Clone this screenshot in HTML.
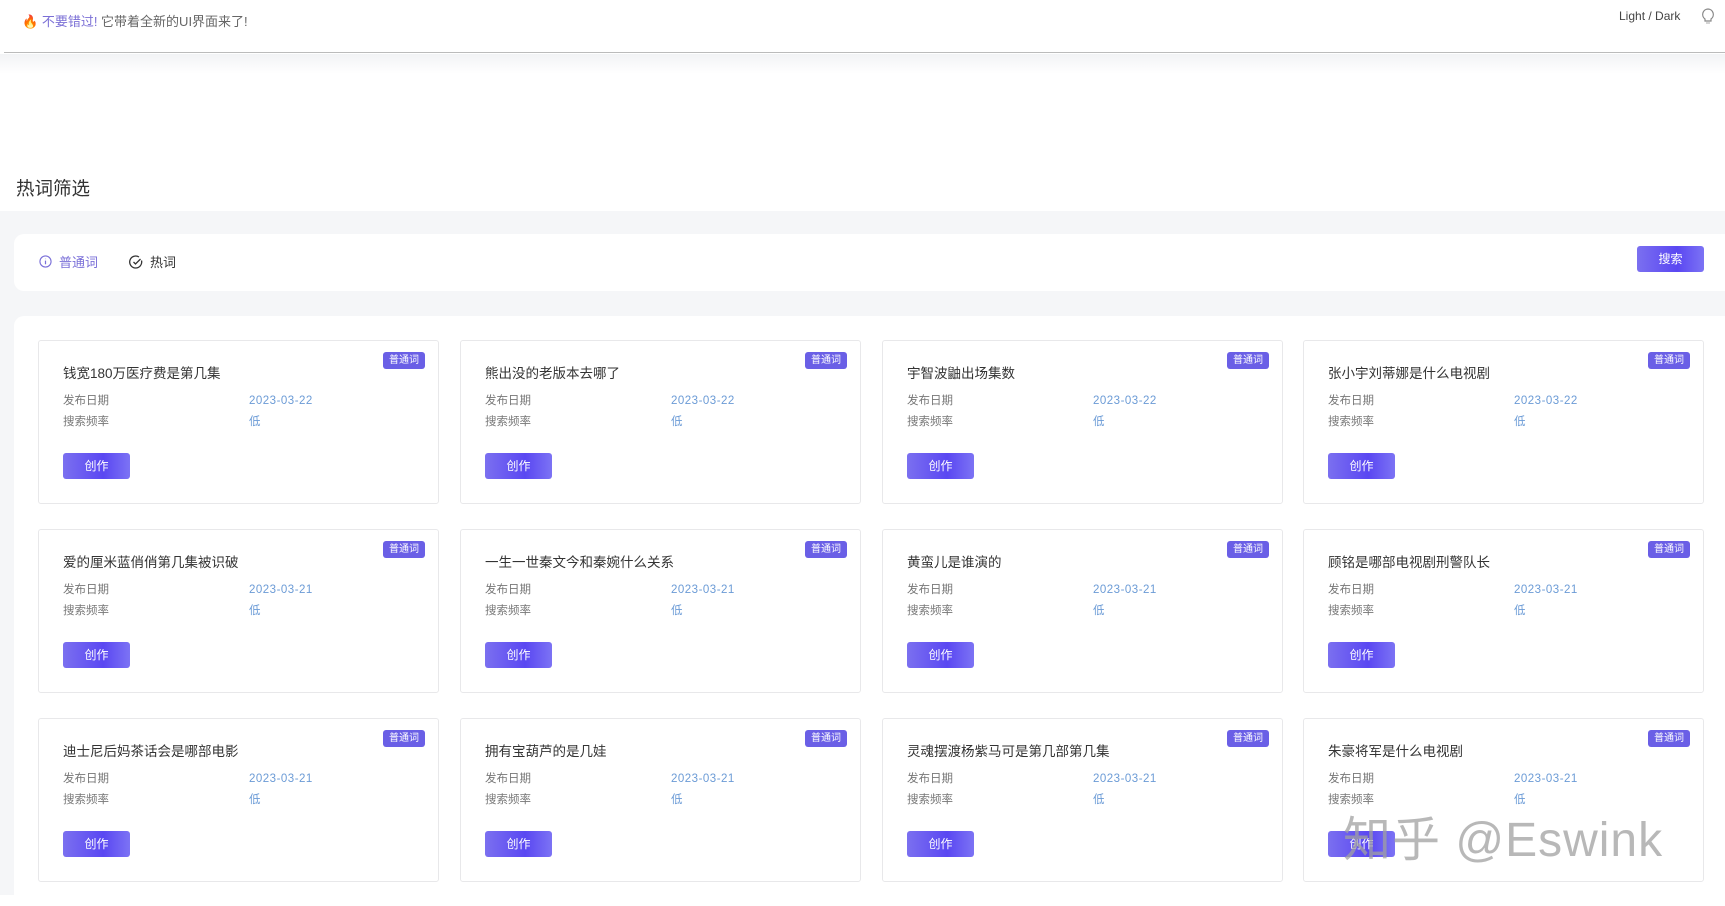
<!DOCTYPE html>
<html><head><meta charset="utf-8"><style>
*{box-sizing:border-box;margin:0;padding:0}
body{width:1725px;height:895px;overflow:hidden;background:#fff;font-family:"Liberation Sans","Noto Sans CJK SC",sans-serif;position:relative;color:#333}
.hdr{position:absolute;left:0;top:0;width:1725px;height:53px;background:#fff;border-bottom:1px solid #bbb;margin-left:4px}
.shadow{position:absolute;left:0;top:54px;width:1725px;height:20px;background:linear-gradient(#f2f3f5,#fff)}
.notice{position:absolute;left:22px;top:11px;font-size:13px;color:#666}
.notice b{font-weight:normal;color:#7b6fd6}
.ld{position:absolute;left:1619px;top:9px;font-size:12px;color:#444}
.bulb{position:absolute;left:1701px;top:8px}
.title{position:absolute;left:16px;top:175px;font-size:18.5px;color:#333}
.gray{position:absolute;left:0;top:211px;width:1725px;height:684px;background:#f5f6f8}
.filter{position:absolute;left:14px;top:234px;width:1720px;height:57px;background:#fff;border-radius:10px}
.r1{position:absolute;left:39px;top:252px;font-size:13px;color:#7a6fd8;display:flex;align-items:center;gap:7px}
.r2{position:absolute;left:129px;top:252px;font-size:13px;color:#333;display:flex;align-items:center;gap:7px}
.btn{background:linear-gradient(90deg,#7b70f0,#5a47f2 60%,#7c73f4);color:#fff;border-radius:3px;font-size:12px;text-align:center}
.sbtn{position:absolute;left:1637px;top:246px;width:67px;height:26px;line-height:26px}
.content{position:absolute;left:14px;top:316px;width:1720px;height:590px;background:#fff;border-radius:10px}
.card{position:absolute;width:401px;height:164px;border:1px solid #e8e8ea;border-radius:3px;background:#fff}
.card .t{position:absolute;left:24px;top:21px;font-size:13.5px;color:#333}
.card .l1,.card .l2{position:absolute;left:24px;font-size:11.5px;color:#777}
.card .l1{top:51px}.card .l2{top:72px}
.card .v1,.card .v2{position:absolute;left:210px;font-size:11.5px;color:#6b9bd6}
.card .v1{top:54px;letter-spacing:.5px}.card .v2{top:72px}
.card .tag{position:absolute;right:13px;top:11px;width:42px;height:17px;line-height:17px;background:#6a5fe6;color:#fff;font-size:10px;text-align:center;border-radius:3px}
.card .c{position:absolute;left:24px;top:112px;width:67px;height:26px;line-height:26px}
.wm{position:absolute;left:1343px;top:800px;font-size:48px;color:rgba(160,160,160,.75);letter-spacing:1px;white-space:nowrap}
</style></head><body>
<div class="hdr"></div><div class="shadow"></div>
<div class="notice"><span style="color:#f08a24">🔥</span> <b>不要错过!</b> 它带着全新的UI界面来了!</div>
<div class="ld">Light / Dark</div>
<svg class="bulb" width="14" height="18" viewBox="0 0 14 18"><path d="M7 1a5.5 5.5 0 0 0-3 10v2h6v-2A5.5 5.5 0 0 0 7 1z" fill="none" stroke="#888" stroke-width="1.2"/><path d="M5 15h4" stroke="#aaa"/></svg>
<div class="title">热词筛选</div>
<div class="gray"></div>
<div class="filter"></div>
<div class="r1"><svg width="13" height="13" viewBox="0 0 14 14"><circle cx="7" cy="7" r="6" fill="none" stroke="#7a6fd8" stroke-width="1.2"/><path d="M7 6v4M7 4v.5" stroke="#7a6fd8" stroke-width="1.3"/></svg>普通词</div>
<div class="r2"><svg width="14" height="14" viewBox="0 0 14 14"><path d="M12.5 5.5A6 6 0 1 1 10 2" fill="none" stroke="#333" stroke-width="1.3"/><path d="M4.5 7l2 2 5-5" fill="none" stroke="#333" stroke-width="1.3"/></svg>热词</div>
<div class="btn sbtn">搜索</div>
<div class="content"></div>
<div class="card" style="left:38px;top:340px"><div class="tag">普通词</div><div class="t">钱宽180万医疗费是第几集</div><div class="l1">发布日期</div><div class="v1">2023-03-22</div><div class="l2">搜索频率</div><div class="v2">低</div><div class="btn c">创作</div></div>
<div class="card" style="left:460px;top:340px"><div class="tag">普通词</div><div class="t">熊出没的老版本去哪了</div><div class="l1">发布日期</div><div class="v1">2023-03-22</div><div class="l2">搜索频率</div><div class="v2">低</div><div class="btn c">创作</div></div>
<div class="card" style="left:882px;top:340px"><div class="tag">普通词</div><div class="t">宇智波鼬出场集数</div><div class="l1">发布日期</div><div class="v1">2023-03-22</div><div class="l2">搜索频率</div><div class="v2">低</div><div class="btn c">创作</div></div>
<div class="card" style="left:1303px;top:340px"><div class="tag">普通词</div><div class="t">张小宇刘蒂娜是什么电视剧</div><div class="l1">发布日期</div><div class="v1">2023-03-22</div><div class="l2">搜索频率</div><div class="v2">低</div><div class="btn c">创作</div></div>
<div class="card" style="left:38px;top:529px"><div class="tag">普通词</div><div class="t">爱的厘米蓝俏俏第几集被识破</div><div class="l1">发布日期</div><div class="v1">2023-03-21</div><div class="l2">搜索频率</div><div class="v2">低</div><div class="btn c">创作</div></div>
<div class="card" style="left:460px;top:529px"><div class="tag">普通词</div><div class="t">一生一世秦文今和秦婉什么关系</div><div class="l1">发布日期</div><div class="v1">2023-03-21</div><div class="l2">搜索频率</div><div class="v2">低</div><div class="btn c">创作</div></div>
<div class="card" style="left:882px;top:529px"><div class="tag">普通词</div><div class="t">黄蛮儿是谁演的</div><div class="l1">发布日期</div><div class="v1">2023-03-21</div><div class="l2">搜索频率</div><div class="v2">低</div><div class="btn c">创作</div></div>
<div class="card" style="left:1303px;top:529px"><div class="tag">普通词</div><div class="t">顾铭是哪部电视剧刑警队长</div><div class="l1">发布日期</div><div class="v1">2023-03-21</div><div class="l2">搜索频率</div><div class="v2">低</div><div class="btn c">创作</div></div>
<div class="card" style="left:38px;top:718px"><div class="tag">普通词</div><div class="t">迪士尼后妈茶话会是哪部电影</div><div class="l1">发布日期</div><div class="v1">2023-03-21</div><div class="l2">搜索频率</div><div class="v2">低</div><div class="btn c">创作</div></div>
<div class="card" style="left:460px;top:718px"><div class="tag">普通词</div><div class="t">拥有宝葫芦的是几娃</div><div class="l1">发布日期</div><div class="v1">2023-03-21</div><div class="l2">搜索频率</div><div class="v2">低</div><div class="btn c">创作</div></div>
<div class="card" style="left:882px;top:718px"><div class="tag">普通词</div><div class="t">灵魂摆渡杨紫马可是第几部第几集</div><div class="l1">发布日期</div><div class="v1">2023-03-21</div><div class="l2">搜索频率</div><div class="v2">低</div><div class="btn c">创作</div></div>
<div class="card" style="left:1303px;top:718px"><div class="tag">普通词</div><div class="t">朱豪将军是什么电视剧</div><div class="l1">发布日期</div><div class="v1">2023-03-21</div><div class="l2">搜索频率</div><div class="v2">低</div><div class="btn c">创作</div></div>
<div class="wm">知乎 @Eswink</div>
</body></html>
